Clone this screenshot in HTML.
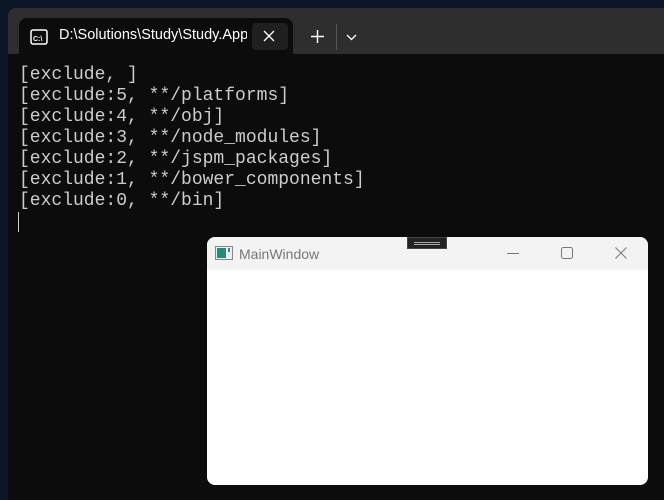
<!DOCTYPE html>
<html><head><style>
html,body{margin:0;width:664px;height:500px;overflow:hidden}
body{background:#0b1526;position:relative;font-family:"Liberation Sans",sans-serif}
.win{position:absolute;left:8px;top:8px;width:656px;height:492px;background:#2e2e2e;border-radius:8px 0 0 0;overflow:hidden}
.tab{position:absolute;left:11px;top:10px;width:274px;height:38px;background:#0c0c0c;border-radius:8px 8px 0 0}
.term{position:absolute;left:0;top:46px;right:0;bottom:0;background:#0c0c0c}
pre{margin:0;position:absolute;left:19px;top:65px;font:18px/21px "Liberation Mono",monospace;color:#cccccc}
.cur{position:absolute;left:18px;top:212px;width:1px;height:20px;background:#ccc}
.mw{position:absolute;left:207px;top:237px;width:441px;height:248px;background:#fff;border-radius:8px;overflow:hidden}
.mwt{height:33px;background:#f3f3f3;position:relative}
</style></head><body>
<div class="win">
<div class="tab"></div>
<div class="term"></div>
</div>
<svg style="position:absolute;left:30px;top:29px" width="18" height="16"><rect x="1" y="1" width="16" height="14" rx="2" fill="none" stroke="#fff" stroke-width="1.5"/><text x="3" y="12" font-size="7" fill="#fff" font-family="Liberation Sans" font-weight="bold">C:\</text></svg>
<div style="position:absolute;left:59px;top:27px;width:188px;overflow:hidden;white-space:nowrap;color:#fff;font-size:14.5px">D:\Solutions\Study\Study.App</div>
<div style="position:absolute;left:252px;top:23px;width:36px;height:27px;background:#1f1f1f;border-radius:4px"></div>
<svg style="position:absolute;left:263px;top:30px" width="12" height="12"><path d="M1 1L11 11M11 1L1 11" stroke="#fff" stroke-width="1.3"/></svg>
<svg style="position:absolute;left:311px;top:30px" width="13" height="13"><path d="M6.5 0V13M0 6.5H13" stroke="#fff" stroke-width="1.4"/></svg>
<div style="position:absolute;left:336px;top:24px;width:1px;height:26px;background:#555"></div>
<svg style="position:absolute;left:346px;top:34px" width="11" height="7"><path d="M1 1L5.5 5.5L10 1" stroke="#fff" stroke-width="1.3" fill="none"/></svg>
<pre>[exclude, ]
[exclude:5, **/platforms]
[exclude:4, **/obj]
[exclude:3, **/node_modules]
[exclude:2, **/jspm_packages]
[exclude:1, **/bower_components]
[exclude:0, **/bin]</pre>
<div class="cur"></div>
<div class="mw"><div class="mwt">
<svg style="position:absolute;left:8px;top:9px" width="18" height="14"><rect x="0.5" y="0.5" width="17" height="13" fill="#eee" stroke="#888"/><rect x="2" y="2" width="9" height="10" fill="#2a8a7a"/><rect x="13" y="2" width="2" height="4" fill="#3a7ac0"/></svg>
<div style="position:absolute;left:32px;top:9px;font-size:14px;color:#777">MainWindow</div>
<svg style="position:absolute;left:300px;top:10px" width="12" height="12"><path d="M0 6.5H12" stroke="#777" stroke-width="1"/></svg>
<svg style="position:absolute;left:354px;top:10px" width="12" height="12"><rect x="0.5" y="0.5" width="11" height="11" rx="2" fill="none" stroke="#777"/></svg>
<svg style="position:absolute;left:408px;top:10px" width="12" height="12"><path d="M0.5 0.5L11.5 11.5M11.5 0.5L0.5 11.5" stroke="#777"/></svg>
</div></div>
<div style="position:absolute;left:407px;top:237px;width:40px;height:12px;background:#222;border:1px solid #444;box-sizing:border-box"><div style="margin:4px 6px 0;height:3px;border-top:1px solid #aaa;border-bottom:1px solid #aaa;box-sizing:border-box"></div></div>
</body></html>
